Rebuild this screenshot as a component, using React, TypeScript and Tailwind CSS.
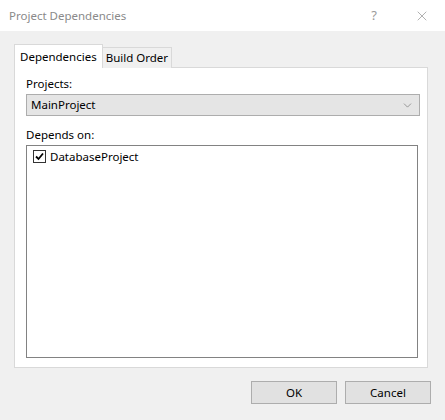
import { ChevronDown, X } from 'lucide-react'

const font = { fontFamily: '"Segoe UI", "Noto Sans", "Open Sans", sans-serif' }

function Button({ label }: { label: string }) {
  return (
    <button className="w-[86px] h-[23px] bg-[#e1e1e1] border border-[#adadad] text-[11.5px] text-black leading-none">
      {label}
    </button>
  )
}

export default function App() {
  return (
    <div className="w-[445px] h-[420px] bg-[#f0f0f0] flex flex-col text-[11.5px] text-black" style={font}>
      {/* title bar */}
      <div className="h-[31px] bg-white flex items-center pl-[9px] shrink-0">
        <span className="text-[11.5px] text-[#8a8a8a] flex-1">Project Dependencies</span>
        <span className="w-[46px] text-center text-[13px] text-[#9a9a9a] mr-[2px]">?</span>
        <div className="w-[46px] flex justify-center">
          <X size={16} strokeWidth={1} className="text-[#8a8a8a]" />
        </div>
      </div>

      {/* tabs */}
      <div className="flex flex-col px-[14px] pt-[13px] pb-[14px] flex-1">
        <div className="flex items-end h-[24px] relative z-10">
          <div className="h-[24px] px-[5px] bg-white border border-[#d9d9d9] border-b-0 flex items-center">
            Dependencies
          </div>
          <div className="h-[21px] px-[3px] bg-[#f0f0f0] border border-[#d9d9d9] border-l-0 border-b-0 flex items-center">
            Build Order
          </div>
        </div>
        <div className="bg-white border border-[#d9d9d9] -mt-px mr-[3px] h-[301px] flex flex-col pl-[11px] pr-[7px] pt-[6px]">
          <div className="h-[19px] leading-[19px]">Projects:</div>
          <div className="h-[22px] bg-[#e5e5e5] border border-[#adadad] flex items-center pl-[4px] pr-[5px] mt-[1px]">
            <span className="flex-1">MainProject</span>
            <ChevronDown size={13} strokeWidth={1} className="text-[#555]" />
          </div>
          <div className="h-[19px] leading-[19px] mt-[9px]">Depends on:</div>
          <div className="h-[213px] mt-[1px] mr-[2px] border border-[#828282] bg-white pt-[4px] pl-[6px]">
            <div className="flex items-center gap-[4px] h-[13px]">
              <div className="w-[13px] h-[13px] border border-[#333] flex items-center justify-center">
                <svg width="9" height="9" viewBox="0 0 9 9">
                  <path d="M1 4.5 L3.5 7 L8 1.5" stroke="#000" strokeWidth="1.8" fill="none" />
                </svg>
              </div>
              <span>DatabaseProject</span>
            </div>
          </div>
        </div>
        <div className="flex justify-end gap-[8px] mt-[13px]">
          <Button label="OK" />
          <Button label="Cancel" />
        </div>
      </div>
    </div>
  )
}
